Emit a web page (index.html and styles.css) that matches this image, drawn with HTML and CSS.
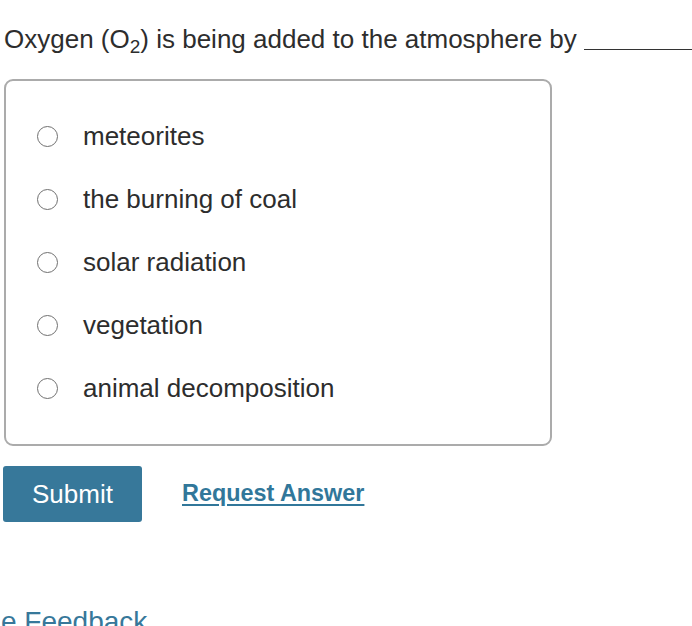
FILE: index.html
```html
<!DOCTYPE html>
<html>
<head>
<meta charset="utf-8">
<link rel="stylesheet" href="styles.css">
</head>
<body>
<div class="page">
  <p class="question">Oxygen (O<sub>2</sub>) is being added to the atmosphere by <span class="blank"></span></p>
  <div class="choices">
    <label class="choice"><span class="radio"></span><span class="text">meteorites</span></label>
    <label class="choice"><span class="radio"></span><span class="text">the burning of coal</span></label>
    <label class="choice"><span class="radio"></span><span class="text">solar radiation</span></label>
    <label class="choice"><span class="radio"></span><span class="text">vegetation</span></label>
    <label class="choice"><span class="radio"></span><span class="text">animal decomposition</span></label>
  </div>
  <div class="actions">
    <button class="submit">Submit</button>
    <a class="request" href="#">Request Answer</a>
  </div>
  <div class="feedback">e Feedback</div>
</div>
</body>
</html>
```
FILE: styles.css
```css
html, body {
  margin: 0;
  padding: 0;
  background: #fff;
}
body {
  font-family: "Liberation Sans", Arial, sans-serif;
  color: #2d2d2d;
  overflow: hidden;
  width: 692px;
  height: 626px;
}
.page {
  padding-left: 4px;
}
.question {
  margin: 0;
  padding-top: 24px;
  font-size: 26px;
  line-height: 30px;
  white-space: nowrap;
}
.question sub {
  font-size: 19px;
  line-height: 0;
  vertical-align: -5px;
}
.blank {
  display: inline-block;
  width: 110px;
  border-bottom: 1.5px solid #333;
  vertical-align: -2px;
  margin-left: 0;
}
.choices {
  margin-top: 25px;
  width: 544px;
  border: 2px solid #ababab;
  border-radius: 9px;
  padding: 24px 0 24px 0;
  display: flex;
  flex-direction: column;
}
.choice {
  display: flex;
  align-items: center;
  height: 63px;
  padding-left: 31px;
  font-size: 26px;
}
.radio {
  box-sizing: border-box;
  width: 21px;
  height: 21px;
  border: 1.8px solid #707070;
  border-radius: 50%;
  flex: none;
  margin-right: 25px;
}
.actions {
  display: flex;
  align-items: center;
  margin-top: 20px;
  margin-left: -1px;
  gap: 40px;
}
.submit {
  font-family: "Liberation Sans", Arial, sans-serif;
  font-size: 26px;
  color: #fff;
  background: #37789a;
  border: none;
  border-radius: 3px;
  width: 139px;
  height: 56px;
  padding: 0;
}
.request {
  font-size: 23.4px;
  font-weight: bold;
  color: #31779a;
  text-decoration: underline;
  text-underline-offset: 3px;
  margin-top: -2px;
}
.feedback {
  margin-top: 84px;
  margin-left: -3px;
  font-size: 28px;
  color: #37789a;
  line-height: 32px;
}
```
